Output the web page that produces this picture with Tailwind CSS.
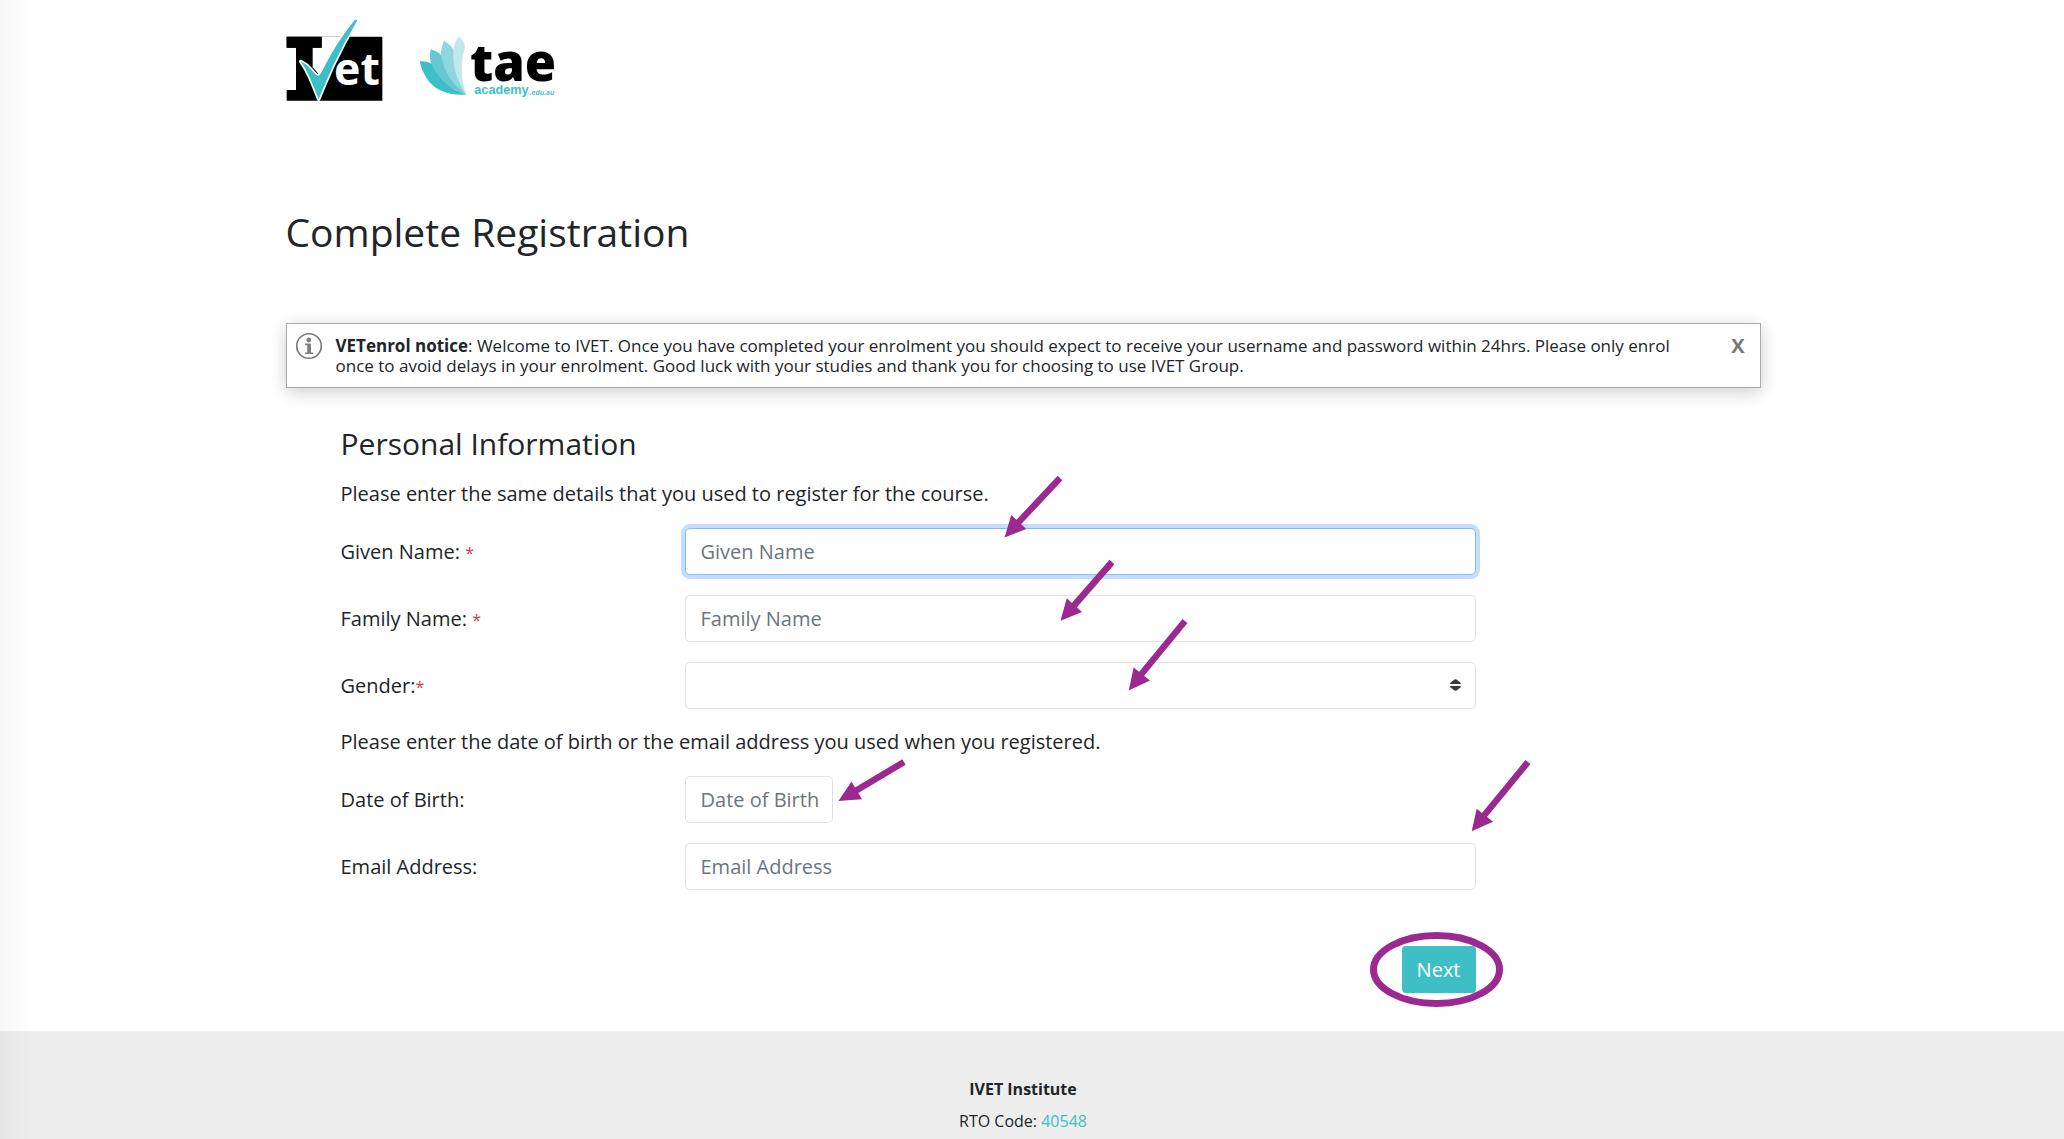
<!DOCTYPE html>
<html lang="en">

<head>
    <meta charset="UTF-8">
    <meta name="viewport" content="width=device-width, initial-scale=1.0">
    <script src="https://cdn.jsdelivr.net/npm/@tailwindcss/browser@4"></script>
    <title>Complete Registration</title>
</head>

<body class="relative flex min-h-screen flex-col overflow-x-hidden bg-white font-['Open_Sans','Noto_Sans',sans-serif] text-xl text-[#212529]">
    <!-- Soft shade on the left edge -->
    <div class="absolute inset-y-0 left-0 w-8 bg-linear-to-r from-black/3 to-transparent"></div>

    <div class="pr-[18px]">
        <div class="relative mx-auto w-full max-w-[1475px] pb-[38px]">
            <!-- Logos -->
            <header class="flex items-start gap-9 pt-[18px]">
                <svg class="h-[84px] w-[97px]" viewBox="48 24 291 252" role="img" aria-label="IVet">
                    <path d="M50 80H337V272H50V240H78V113H50Z" fill="#000" />
                    <path d="M155 80V113H128V172L146 192L160 174L238 80Z" fill="#fff" />
                    <path d="M50 80H155V113H50Z" fill="#000" />
                    <path d="M92 154Q112 164 125 180Q138 197 144 197Q150 197 161 174Q200 96 254 30Q261 26 261 33Q222 98 190 166Q165 222 146 268Q132 232 118 200Q106 174 92 154Z" fill="#3dbfc6" stroke="#fff" stroke-width="10" stroke-linejoin="round" paint-order="stroke" />
                    <text x="192" y="226" font-size="134" font-weight="700" fill="#fff">et</text>
                </svg>
                <svg class="h-[84px] w-[138px]" viewBox="446 24 414 252" role="img" aria-label="tae academy.edu.au">
                    <path d="M566 79Q585 98 584 114Q562 180 588 254Q530 190 549 115Q554 95 566 79Z" fill="#c1e8eb" />
                    <path d="M521 92Q543 105 549 119Q544 190 588 254Q505 205 512 125Q514 107 521 92Z" fill="#8fd7dc" />
                    <path d="M481 118Q503 124 513 137Q525 210 588 254Q487 220 479 145Q478 130 481 118Z" fill="#66c9d0" />
                    <path d="M448 154Q471 152 484 162Q513 230 588 254Q500 258 466 200Q452 177 448 154Z" fill="#3dbfc6" />
                    <text x="599" y="213" font-size="152" font-weight="800" fill="#000">tae</text>
                    <text x="612" y="253" font-size="38" font-weight="700" fill="#3dbfc6" font-family="Liberation Sans, sans-serif">academy</text>
                    <text x="778" y="254" font-size="21" font-weight="700" font-style="italic" fill="#3dbfc6" font-family="Liberation Sans, sans-serif">.edu.au</text>
                </svg>
            </header>

            <h1 class="mt-[106px] text-[39px] leading-12">Complete Registration</h1>

            <!-- Notice -->
            <div class="mt-[67px] flex items-start border border-[#aaa] bg-white pt-2 pr-[15px] pb-[11px] pl-2 shadow-[0_4px_16px_rgba(0,0,0,0.2)]">
                <svg class="size-7 shrink-0" viewBox="0 0 28 28" fill="none" aria-hidden="true">
                    <circle cx="14" cy="14" r="12.3" stroke="#777" stroke-width="1.6" />
                    <circle cx="13.8" cy="8" r="2.4" fill="#808080" />
                    <path d="M10 11.6H16V20.4H18.2V22H10V20.4H12.2V13.2H10Z" fill="#808080" />
                </svg>
                <p class="ml-[13px] flex-1 pt-1 text-[17px] leading-5"><b>VETenrol notice</b>: Welcome to IVET. Once you have completed your enrolment you should expect to receive your username and password within 24hrs. Please only enrol once to avoid delays in your enrolment. Good luck with your studies and thank you for choosing to use IVET Group.</p>
                <button type="button" class="ml-10 pt-1 text-xl leading-5 font-bold text-[#777]" aria-label="Close notice">X</button>
            </div>

            <!-- Registration form -->
            <form class="mr-[285px] ml-[55px] pt-[38px]">
                <h2 class="text-[30px] leading-9">Personal Information</h2>
                <p class="mt-4 leading-8">Please enter the same details that you used to register for the course.</p>

                <div class="mt-[18px] grid grid-cols-[344px_1fr] items-center gap-y-5">
                    <label for="givenName">Given Name: <span class="text-base text-[#dc3545]">*</span></label>
                    <input id="givenName" type="text" placeholder="Given Name" class="h-[47px] w-full rounded-[5px] border border-[#80bdff] bg-white px-[15px] ring-4 ring-[#c6dcff] outline-none placeholder:text-[#6c757d]">

                    <label for="familyName">Family Name: <span class="text-base text-[#dc3545]">*</span></label>
                    <input id="familyName" type="text" placeholder="Family Name" class="h-[47px] w-full rounded-[5px] border border-[#dee2e6] bg-white px-[15px] placeholder:text-[#6c757d]">

                    <label for="gender">Gender:<span class="text-base text-[#dc3545]">*</span></label>
                    <div class="relative">
                        <select id="gender" class="block h-[47px] w-full appearance-none rounded-[5px] border border-[#dee2e6] bg-white px-[15px]">
                            <option></option>
                            <option>Female</option>
                            <option>Male</option>
                            <option>Other</option>
                        </select>
                        <svg class="pointer-events-none absolute top-[17px] right-[15px] h-3 w-[11px]" viewBox="0 0 11 12" fill="#343a40" aria-hidden="true">
                            <path d="M0.5 5Q-0.2 4.4 0.6 3.6L4.5 0.5Q5.5 -0.2 6.5 0.5L10.4 3.6Q11.2 4.4 10.5 5Z" />
                            <path d="M0.5 7Q-0.2 7.6 0.6 8.4L4.5 11.5Q5.5 12.2 6.5 11.5L10.4 8.4Q11.2 7.6 10.5 7Z" />
                        </svg>
                    </div>
                </div>

                <p class="mt-[17px] leading-8">Please enter the date of birth or the email address you used when you registered.</p>

                <div class="mt-[18px] grid grid-cols-[344px_1fr] items-center gap-y-5">
                    <label for="dob">Date of Birth:</label>
                    <input id="dob" type="text" placeholder="Date of Birth" class="h-[47px] w-[148px] rounded-[5px] border border-[#dee2e6] bg-white pl-[15px] placeholder:text-[#6c757d]">

                    <label for="email">Email Address:</label>
                    <input id="email" type="email" placeholder="Email Address" class="h-[47px] w-full rounded-[5px] border border-[#dee2e6] bg-white px-[15px] placeholder:text-[#6c757d]">
                </div>

                <div class="mt-14 flex justify-end">
                    <button type="submit" class="h-[47px] rounded-[4px] bg-[#3ebfc6] px-[15px] text-white">Next</button>
                </div>
            </form>

            <!-- Arrows and ring drawn over the form -->
            <svg class="pointer-events-none absolute top-0 left-0 h-[1031px] w-[1475px]" viewBox="286 0 1475 1031" fill="#9b2a90" stroke="none" aria-hidden="true">
                <g stroke="#9b2a90" stroke-width="6.5">
                    <path d="M1060 478L1016 525" />
                    <path d="M1112 562L1071 609" />
                    <path d="M1185 621L1139 677" />
                    <path d="M904 762L852 793" />
                    <path d="M1528 762L1482 818" />
                </g>
                <path d="M1004.5 537.5L1011.3 515L1026.3 529Z" />
                <path d="M1060.5 620.7L1066.7 598.3L1082 612Z" />
                <path d="M1128.7 690.5L1133.7 667.5L1150 680.5Z" />
                <path d="M838.4 801L851.5 781.5L862 799.3Z" />
                <path d="M1471.7 831.3L1476.7 808.7L1493 821.7Z" />
                <ellipse cx="1436.5" cy="969.5" rx="63" ry="34" fill="none" stroke="#9b2a90" stroke-width="7" />
            </svg>
        </div>
    </div>

    <!-- Footer -->
    <footer class="grow bg-[#ededed] pt-[42px] pr-[18px] text-center text-base">
        <p class="leading-8 font-bold">IVET Institute</p>
        <p class="leading-8">RTO Code: <a href="#" class="text-[#3ebfc6]">40548</a></p>
    </footer>
</body>

</html>
